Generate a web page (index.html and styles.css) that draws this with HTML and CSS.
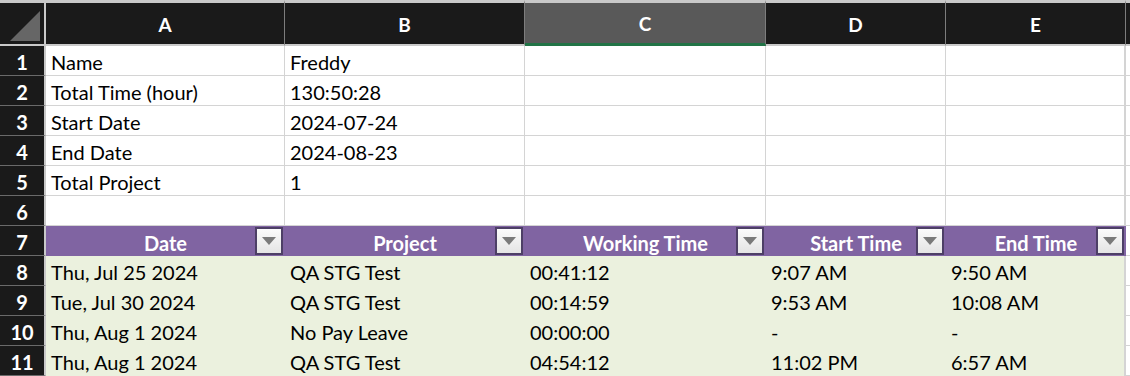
FILE: index.html
```html
<!DOCTYPE html>
<html>
<head>
<meta charset="utf-8">
<link rel="stylesheet" href="styles.css">
</head>
<body>
<div class="sheet">
  <div class="corner"><span class="tri"></span></div>
  <div class="ch">A</div>
  <div class="ch">B</div>
  <div class="ch sel">C</div>
  <div class="ch">D</div>
  <div class="ch">E</div>
  <div class="ch fill"></div>

  <div class="rh">1</div>
  <div class="c">Name</div><div class="c">Freddy</div><div class="c"></div><div class="c"></div><div class="c"></div><div class="c fill"></div>

  <div class="rh">2</div>
  <div class="c">Total Time (hour)</div><div class="c">130:50:28</div><div class="c"></div><div class="c"></div><div class="c"></div><div class="c fill"></div>

  <div class="rh">3</div>
  <div class="c">Start Date</div><div class="c">2024-07-24</div><div class="c"></div><div class="c"></div><div class="c"></div><div class="c fill"></div>

  <div class="rh">4</div>
  <div class="c">End Date</div><div class="c">2024-08-23</div><div class="c"></div><div class="c"></div><div class="c"></div><div class="c fill"></div>

  <div class="rh">5</div>
  <div class="c">Total Project</div><div class="c">1</div><div class="c"></div><div class="c"></div><div class="c"></div><div class="c fill"></div>

  <div class="rh">6</div>
  <div class="c"></div><div class="c"></div><div class="c"></div><div class="c"></div><div class="c"></div><div class="c fill"></div>

  <div class="rh">7</div>
  <div class="th">Date<span class="filter"></span></div>
  <div class="th">Project<span class="filter"></span></div>
  <div class="th">Working Time<span class="filter"></span></div>
  <div class="th">Start Time<span class="filter"></span></div>
  <div class="th">End Time<span class="filter"></span></div>
  <div class="c fill"></div>

  <div class="rh">8</div>
  <div class="td">Thu, Jul 25 2024</div><div class="td">QA STG Test</div><div class="td">00:41:12</div><div class="td">9:07 AM</div><div class="td">9:50 AM</div><div class="c fill"></div>

  <div class="rh">9</div>
  <div class="td">Tue, Jul 30 2024</div><div class="td">QA STG Test</div><div class="td">00:14:59</div><div class="td">9:53 AM</div><div class="td">10:08 AM</div><div class="c fill"></div>

  <div class="rh">10</div>
  <div class="td">Thu, Aug 1 2024</div><div class="td">No Pay Leave</div><div class="td">00:00:00</div><div class="td">-</div><div class="td">-</div><div class="c fill"></div>

  <div class="rh">11</div>
  <div class="td">Thu, Aug 1 2024</div><div class="td">QA STG Test</div><div class="td">04:54:12</div><div class="td">11:02 PM</div><div class="td">6:57 AM</div><div class="c fill"></div>
</div>
</body>
</html>
```

FILE: styles.css
```css
html, body {
  margin: 0;
  padding: 0;
  background: #ffffff;
}

body {
  font-family: Lato, "Open Sans", sans-serif;
  font-size: 20px;
  color: #000;
  width: 1130px;
  height: 376px;
  overflow: hidden;
}

.sheet {
  display: grid;
  grid-template-columns: 46px 239px 240px 241px 180px 180px 4px;
  grid-template-rows: 46px repeat(11, 30px);
}

.corner {
  background: #1a1a1a;
  border-top: 3px solid #c9c9c9;
  border-bottom: 2px solid #c9c9c9;
  border-right: 2px solid #c9c9c9;
  display: flex;
  align-items: flex-end;
  justify-content: flex-end;
  padding: 0 4px 3px 0;
}

.tri {
  width: 30px;
  height: 30px;
  background: #666666;
  clip-path: polygon(100% 0, 100% 100%, 0 100%);
}

.ch {
  background: #1a1a1a;
  color: #ffffff;
  font-weight: 700;
  font-size: 19px;
  border-top: 3px solid #c9c9c9;
  border-bottom: 2px solid #c9c9c9;
  border-right: 1px solid #7d7d7d;
  display: flex;
  align-items: center;
  justify-content: center;
  padding-top: 1px;
}

.ch.sel {
  background: #595959;
  border-bottom: 3px solid #217346;
}

.ch.fill {
  border-right: none;
}

.rh {
  background: #1a1a1a;
  color: #ffffff;
  font-weight: 700;
  font-size: 20px;
  border-right: 2px solid #c9c9c9;
  border-bottom: 1px solid #6a6a6a;
  display: flex;
  align-items: flex-end;
  justify-content: center;
  padding-bottom: 1px;
}

.c {
  background: #ffffff;
  border-right: 1px solid #d4d4d4;
  border-bottom: 1px solid #d4d4d4;
  display: flex;
  align-items: flex-end;
  padding: 0 0 1px 5px;
  white-space: nowrap;
}

.c.fill {
  border-right: none;
  border-left: 2px solid #d4d4d4;
  padding: 0;
  margin-left: -2px;
}

.th {
  position: relative;
  background: #8064a2;
  color: #ffffff;
  font-weight: 700;
  display: flex;
  align-items: flex-end;
  justify-content: center;
  padding-bottom: 1px;
  white-space: nowrap;
}

.filter {
  position: absolute;
  right: 2px;
  top: 1px;
  width: 24px;
  height: 24px;
  border: 2px solid #4d3f66;
  background: linear-gradient(#fbfbfb, #e4e4e4);
}

.filter::after {
  content: "";
  position: absolute;
  left: 5px;
  top: 8px;
  width: 0;
  height: 0;
  border-left: 7px solid transparent;
  border-right: 7px solid transparent;
  border-top: 8px solid #7a7a7a;
}

.td {
  background: #ebf1de;
  display: flex;
  align-items: flex-end;
  padding: 0 0 2px 5px;
  white-space: nowrap;
}
```
